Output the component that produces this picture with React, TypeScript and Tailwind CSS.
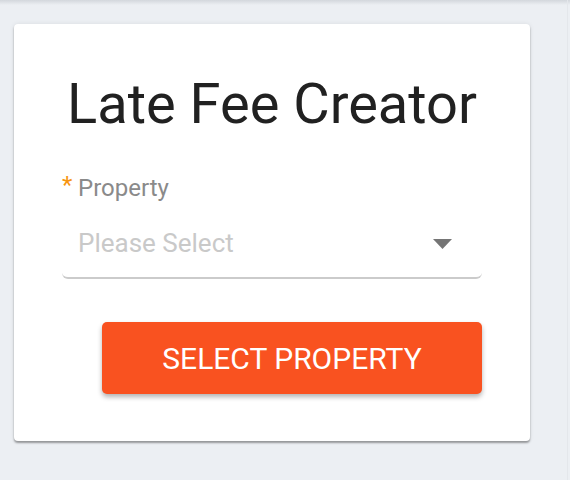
export default function App() {
  return (
    <div
      className="relative min-h-[480px] w-full bg-[#eceff3] pt-[24px] pl-[14px]"
      style={{ fontFamily: "Roboto, 'Liberation Sans', sans-serif" }}
    >
      {/* top header shadow */}
      <div className="absolute left-0 right-0 top-0 h-[5px] bg-gradient-to-b from-[#d3d7dc] to-transparent" />
      <div className="absolute right-[2px] top-0 bottom-0 w-px bg-[#e4e7eb]" />

      <div className="w-[516px] rounded-[4px] bg-white px-[48px] pt-[52px] pb-[47px] shadow-[0_2px_2px_rgba(0,0,0,0.35),0_0_5px_rgba(0,0,0,0.08)]">
        <h1 className="text-center text-[56px] leading-[56px] font-normal text-[#212121]">
          Late Fee Creator
        </h1>

        <div className="mt-[44px] flex items-start">
          <span className="w-[16px] text-[24px] leading-[18px] text-[#f7950f]">*</span>
          <span className="text-[24px] leading-[24px] text-[#8a8a8a]">Property</span>
        </div>

        <div className="flex items-center justify-between rounded-[6px] border-b-2 border-[#cbcbcb] pt-[31px] pb-[21px] pl-[16px] pr-[30px]">
          <span className="text-[26px] leading-[25px] text-[#c9c9c9]">Please Select</span>
          <svg width="19" height="10" viewBox="0 0 19 10">
            <path d="M0 0 L19 0 L9.5 10 Z" fill="#757575" />
          </svg>
        </div>

        <button className="mt-[43px] ml-[40px] flex h-[72px] w-[380px] items-center justify-center rounded-[5px] bg-[#f95220] text-[30px] text-white uppercase shadow-[0_3px_5px_rgba(0,0,0,0.3)]">
          Select Property
        </button>
      </div>
    </div>
  );
}
